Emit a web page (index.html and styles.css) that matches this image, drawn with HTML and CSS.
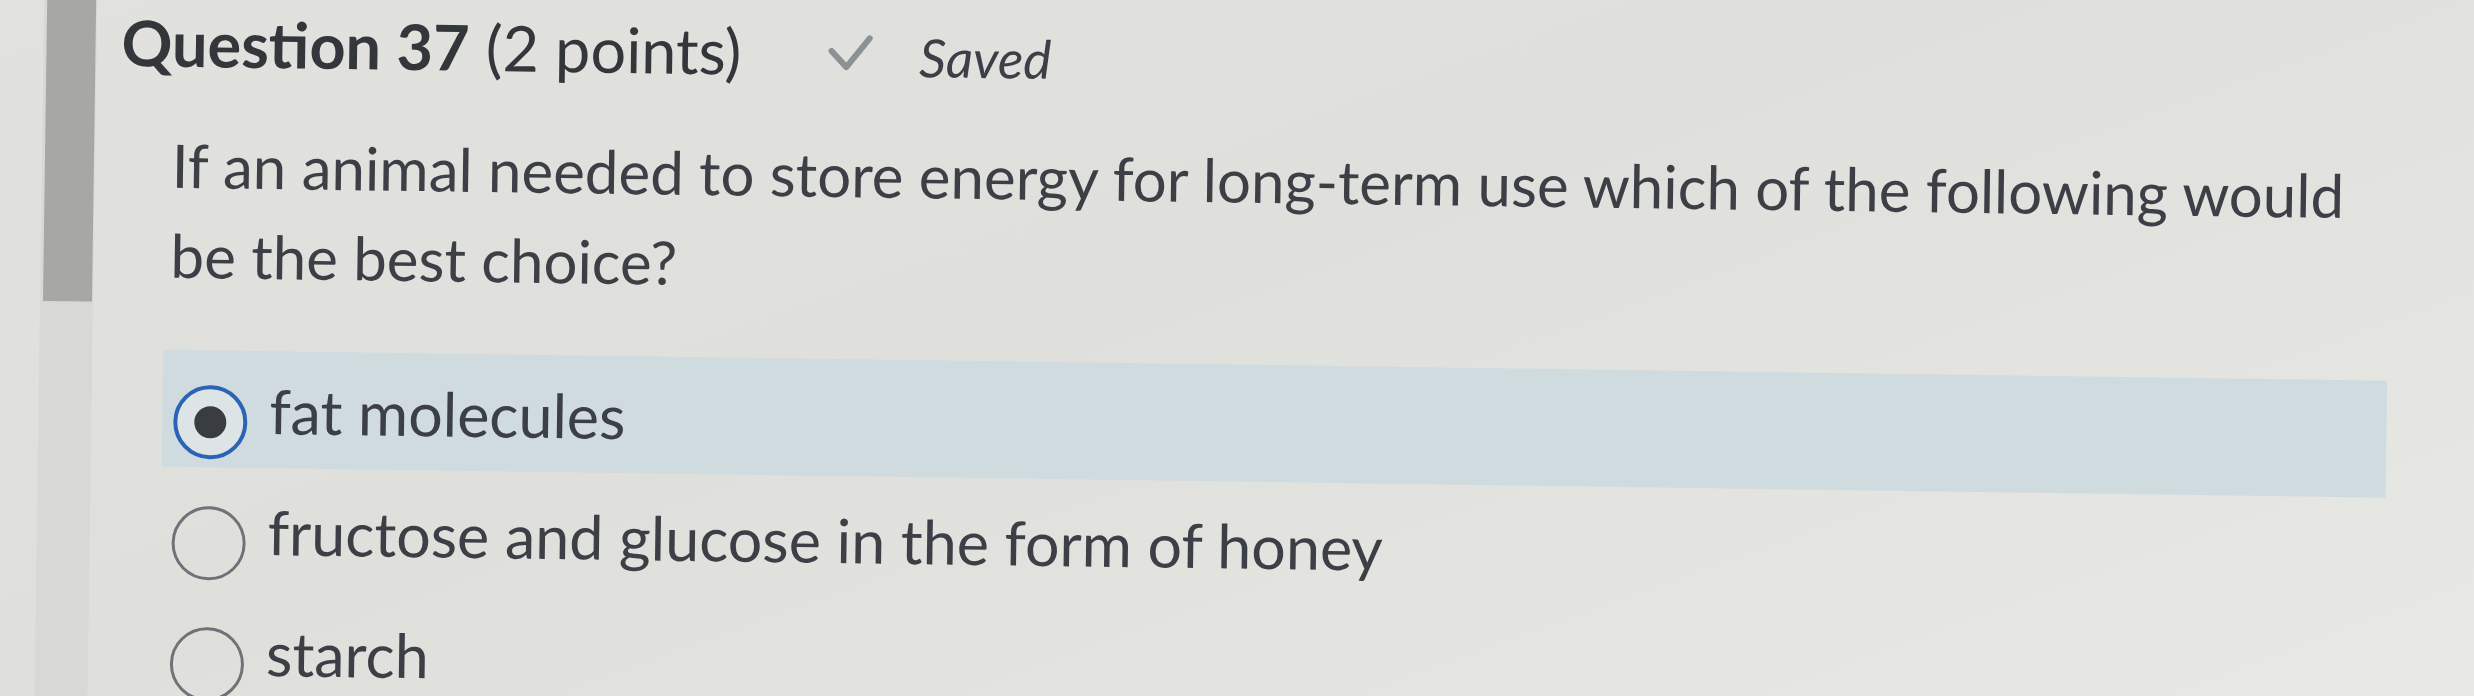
FILE: index.html
```html
<!DOCTYPE html>
<html lang="en">
<head>
  <meta charset="UTF-8" />
  <title>Question 37</title>
  <link rel="stylesheet" href="styles.css">
</head>
<body>
  <div class="page">
    <div class="rail">
      <div class="rail-mark"></div>
    </div>

    <section class="question">
      <div class="q-head">
        <h2 class="q-title"><strong>Question 37</strong> (2 points)</h2>
        <span class="saved">
          <svg class="saved-icon" width="46" height="38" viewBox="0 0 46 38">
            <path d="M4 17 L19 33 L42 4" fill="none" stroke="#8b9296" stroke-width="6" stroke-linecap="round" stroke-linejoin="round" />
          </svg>
          <em>Saved</em>
        </span>
      </div>

      <p class="q-text">If an animal needed to store energy for long-term use which of the following would be the best choice?</p>

      <div class="choices">
        <label class="choice selected">
          <span class="radio"><span class="radio-dot"></span></span>
          <span class="choice-text">fat molecules</span>
        </label>
        <label class="choice">
          <span class="radio"></span>
          <span class="choice-text">fructose and glucose in the form of honey</span>
        </label>
        <label class="choice">
          <span class="radio"></span>
          <span class="choice-text">starch</span>
        </label>
      </div>
    </section>
  </div>
</body>
</html>
```

FILE: styles.css
```css
body {
  margin: 0;
  height: 696px;
  overflow: hidden;
  font-family: 'Lato', 'Open Sans', sans-serif;
  color: #3c3f45;
  background: linear-gradient(160deg, #e1e1de 0%, #dfdfdc 45%, #e8e8e5 100%);
}

.page {
  display: flex;
  width: 2474px;
  transform: rotate(0.8deg);
  transform-origin: 120px 300px;
}

/* left rail with the current-question marker */
.rail {
  width: 53px;
  margin-left: 40px;
  height: 760px;
  background: #d8d8d5;
}

.rail-mark {
  width: 49px;
  margin-left: 3px;
  height: 302px;
  background: #a7a7a5;
}

.question {
  flex: 1;
  padding-left: 25px;
}

.q-head {
  display: flex;
  align-items: baseline;
  padding-top: 5px;
}

.q-title {
  margin: 0;
  font-size: 63px;
  line-height: 74px;
  font-weight: 400;
  color: #33363b;
}

.q-title strong {
  font-weight: 700;
}

.saved {
  display: flex;
  align-items: baseline;
  margin-left: 86px;
  font-size: 53px;
  color: #3c3f47;
}

.saved-icon {
  align-self: center;
  margin-right: 46px;
  position: relative;
  top: -3px;
}

.q-text {
  margin: 40px 0 0 52px;
  max-width: 2190px;
  font-size: 60px;
  line-height: 90px;
}

.choices {
  display: flex;
  flex-direction: column;
  gap: 4px;
  margin-top: 50px;
  margin-left: 46px;
  width: 2224px;
}

.choice {
  display: flex;
  align-items: flex-start;
  gap: 22px;
  padding: 26px 11px 23px;
  font-size: 61px;
  line-height: 68px;
}

.choice.selected {
  background: #d0dbdf;
}

.radio {
  box-sizing: border-box;
  width: 74px;
  height: 74px;
  margin-top: 9px;
  margin-bottom: -15px;
  flex: none;
  border: 3px solid #6f7276;
  border-radius: 50%;
  display: flex;
  align-items: center;
  justify-content: center;
}

.selected .radio {
  border: 4px solid #2b63b5;
  background: #dde4e6;
}

.radio-dot {
  width: 32px;
  height: 32px;
  border-radius: 50%;
  background: #393c40;
}
```
